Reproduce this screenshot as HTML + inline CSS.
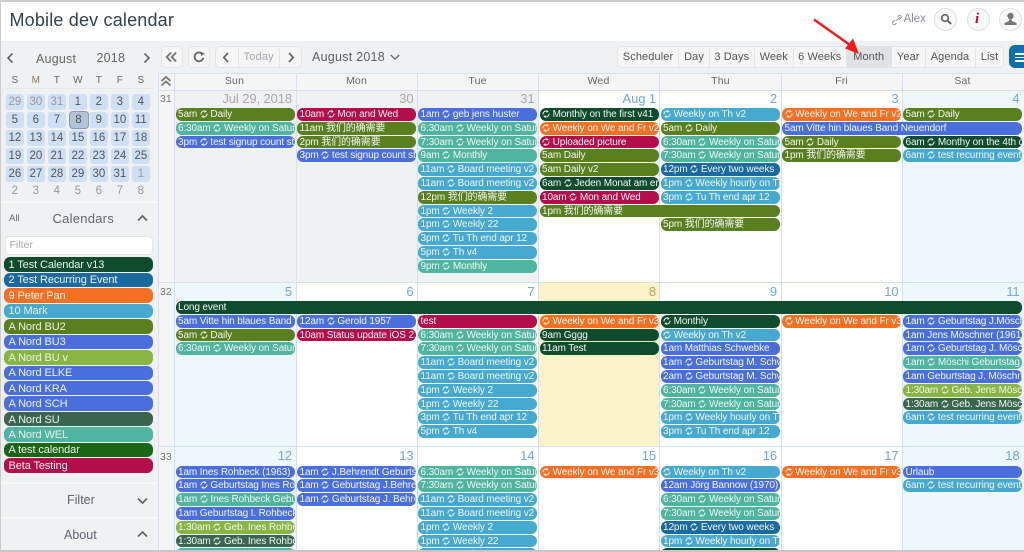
<!DOCTYPE html>
<html><head><meta charset="utf-8"><style>
*{box-sizing:border-box}
html,body{margin:0;padding:0;background:#fff}
body{width:1024px;height:552px;overflow:hidden;font-family:"Liberation Sans","Noto Sans CJK SC",sans-serif}
#w{position:absolute;left:0;top:0;width:1024px;height:552px;overflow:hidden}
.a{position:absolute}
.t{position:absolute;white-space:nowrap;line-height:1}
.cell{position:absolute;width:119px}
.e{height:12.8px;margin-bottom:1px;border-radius:6px;color:#f4f6f4;font-size:10px;letter-spacing:-.12px;line-height:13.8px;padding-left:2.5px;white-space:nowrap;overflow:hidden;position:relative}
.sp{height:13.8px}
.e svg{width:8px;height:8px;vertical-align:-1px;margin:0}
.o{background:#5a7f1e}.g{background:#4fb5a0}.b{background:#4a6edb}.c{background:#b30d4b}.l{background:#46a9cf}.d{background:#0f4c2e}.k{background:#1a6aa0}.r{background:#f57022}.v{background:#88b544}.s{background:#3a6650}.y{background:#1a6615}
.mc{position:absolute;width:18.7px;height:16px;border-radius:3px;background:#cfdff6;text-align:center;font-size:11.5px;line-height:16px;color:#555}
.mn{position:absolute;width:18.7px;text-align:center;font-size:11.5px;line-height:16px;color:#999}
.cal{position:absolute;left:4px;width:148.5px;height:14.5px;border-radius:6px;color:#eef2ee;font-size:11px;letter-spacing:-.1px;line-height:14.5px;padding:.8px 0 0 4.5px;white-space:nowrap}
.btn{position:absolute;top:46px;height:22px;border:1px solid #e3e4e7;border-radius:5px;background:#f6f6f7}
.vb{position:absolute;top:46px;height:22px;border-right:1px solid #e3e4e7;font-size:11px;line-height:23px;text-align:center;color:#555;letter-spacing:.1px}
.dn{position:absolute;text-align:right;font-size:13px;letter-spacing:-.1px;line-height:16px;color:#6fa8dc;width:119px}
.ln{position:absolute;background:#d3e0f8}
.hd{position:absolute;top:75px;font-size:10.5px;line-height:13px;color:#666;text-align:center;width:121px;letter-spacing:.2px}
.wk{position:absolute;left:160px;font-size:10.5px;line-height:12px;color:#777}
</style></head><body><div id="w">
<svg width="0" height="0" style="position:absolute"><defs><symbol id="r" viewBox="0 0 10 10"><path d="M1.3 5.6A3.7 3.7 0 0 1 6.6 1.7M8.7 4.4A3.7 3.7 0 0 1 3.4 8.3" fill="none" stroke="#f2f5f2" stroke-width="1.2"/><path d="M5.6 0L8.4 2.1 5.6 3.6zM4.4 10L1.6 7.9 4.4 6.4z" fill="#f2f5f2"/></symbol></defs></svg>

<!-- header -->
<div class="a" style="left:0;top:0;width:1024px;height:1.5px;background:#ccc"></div>
<div class="a" style="left:0;top:0;width:1px;height:552px;background:#ccc;z-index:5"></div>
<div class="t" style="left:9.5px;top:10.5px;font-size:18px;color:#33404d;letter-spacing:.18px">Mobile dev calendar</div>
<svg class="a" style="left:892px;top:15px" width="10" height="10" viewBox="0 0 10 10"><path d="M4.2 5.8L7.9 2.1M5.6 1.9l1-1a1.4 1.4 0 0 1 2.2 2.2L7 5M4.400 8.100l-1 1A1.400 1.400 0 0 1 1 6.900L3 5" fill="none" stroke="#999" stroke-width="1"/></svg>
<div class="t" style="left:903.5px;top:14px;font-size:11.5px;color:#8a8f96">Alex</div>
<div class="a" style="left:934px;top:8px;width:23px;height:23px;border-radius:50%;border:1px solid #dfdfdf;background:#fafafa"></div>
<svg class="a" style="left:940px;top:13px" width="12" height="12" viewBox="0 0 12 12"><circle cx="5" cy="5" r="3.3" fill="none" stroke="#666" stroke-width="1.7"/><path d="M7.5 7.5L11 11" stroke="#666" stroke-width="2"/></svg>
<div class="a" style="left:966.5px;top:8px;width:23px;height:23px;border-radius:50%;border:1px solid #dfdfdf;background:#fafafa"></div>
<div class="t" style="left:975px;top:12px;font-size:15px;font-weight:bold;font-style:italic;color:#c8102e;font-family:'Liberation Serif',serif">i</div>
<div class="a" style="left:999px;top:8px;width:23px;height:23px;border-radius:50%;border:1px solid #dfdfdf;background:#fafafa"></div>
<svg class="a" style="left:1004px;top:12px" width="13" height="14" viewBox="0 0 13 14"><circle cx="6.5" cy="4" r="3.2" fill="#777"/><path d="M5 7.5h3v1.5l4.5 2v2H.5v-2L5 9z" fill="#777"/></svg>

<!-- toolbar / sidebar bg -->
<div class="a" style="left:0;top:41px;width:1024px;height:33px;background:#f0f1f3"></div>
<div class="a" style="left:0;top:41px;width:158px;height:511px;background:#f0f1f3"></div>

<!-- mini calendar head -->
<svg class="a" style="left:6px;top:52px" width="8" height="12" viewBox="0 0 8 12"><path d="M6.5 1.500L2 6l4.500 4.500" fill="none" stroke="#555" stroke-width="1.5"/></svg>
<div class="t" style="left:36px;top:52.5px;font-size:12.5px;color:#666;letter-spacing:.2px">August</div>
<div class="t" style="left:96.5px;top:51.5px;font-size:12.5px;color:#666;letter-spacing:.2px">2018</div>
<svg class="a" style="left:143px;top:52px" width="8" height="12" viewBox="0 0 8 12"><path d="M1.5 1.500L6 6l-4.500 4.500" fill="none" stroke="#555" stroke-width="1.5"/></svg>
<div class="mn" style="left:5.5px;top:73px;color:#666;font-size:10px">S</div><div class="mn" style="left:26.5px;top:73px;color:#8a7a5a;font-size:10px">M</div><div class="mn" style="left:47.5px;top:73px;color:#666;font-size:10px">T</div><div class="mn" style="left:68.5px;top:73px;color:#666;font-size:10px">W</div><div class="mn" style="left:89.5px;top:73px;color:#666;font-size:10px">T</div><div class="mn" style="left:110.5px;top:73px;color:#666;font-size:10px">F</div><div class="mn" style="left:131.5px;top:73px;color:#666;font-size:10px">S</div>
<div class="a" style="left:5px;top:88px;width:148px;height:1px;background:#e6e7ea"></div>

<div class="mc" style="left:5.5px;top:94px;color:#999">29</div><div class="mc" style="left:26.5px;top:94px;color:#999">30</div><div class="mc" style="left:47.5px;top:94px;color:#999">31</div><div class="mc" style="left:68.5px;top:94px">1</div><div class="mc" style="left:89.5px;top:94px">2</div><div class="mc" style="left:110.5px;top:94px">3</div><div class="mc" style="left:131.5px;top:94px">4</div>
<div class="mc" style="left:5.5px;top:112px">5</div><div class="mc" style="left:26.5px;top:112px">6</div><div class="mc" style="left:47.5px;top:112px">7</div><div class="mc" style="left:68.5px;top:111px;height:18px;width:20px;background:#b5c3d8;border:1px solid #8a9bb0;line-height:16px;border-radius:4px">8</div><div class="mc" style="left:89.5px;top:112px">9</div><div class="mc" style="left:110.5px;top:112px">10</div><div class="mc" style="left:131.5px;top:112px">11</div>
<div class="mc" style="left:5.5px;top:130px">12</div><div class="mc" style="left:26.5px;top:130px">13</div><div class="mc" style="left:47.5px;top:130px">14</div><div class="mc" style="left:68.5px;top:130px">15</div><div class="mc" style="left:89.5px;top:130px">16</div><div class="mc" style="left:110.5px;top:130px">17</div><div class="mc" style="left:131.5px;top:130px">18</div>
<div class="mc" style="left:5.5px;top:148px">19</div><div class="mc" style="left:26.5px;top:148px">20</div><div class="mc" style="left:47.5px;top:148px">21</div><div class="mc" style="left:68.5px;top:148px">22</div><div class="mc" style="left:89.5px;top:148px">23</div><div class="mc" style="left:110.5px;top:148px">24</div><div class="mc" style="left:131.5px;top:148px">25</div>
<div class="mc" style="left:5.5px;top:166px">26</div><div class="mc" style="left:26.5px;top:166px">27</div><div class="mc" style="left:47.5px;top:166px">28</div><div class="mc" style="left:68.5px;top:166px">29</div><div class="mc" style="left:89.5px;top:166px">30</div><div class="mc" style="left:110.5px;top:166px">31</div><div class="mc" style="left:131.5px;top:166px;color:#999">1</div>
<div class="mn" style="left:5.5px;top:183px">2</div><div class="mn" style="left:26.5px;top:183px">3</div><div class="mn" style="left:47.5px;top:183px">4</div><div class="mn" style="left:68.5px;top:183px">5</div><div class="mn" style="left:89.5px;top:183px">6</div><div class="mn" style="left:110.5px;top:183px">7</div><div class="mn" style="left:131.5px;top:183px">8</div>

<!-- calendars -->
<div class="a" style="left:1px;top:201px;width:156px;height:1.5px;background:#f7f7f8"></div>
<div class="t" style="left:9px;top:214px;font-size:9.5px;color:#666">All</div>
<div class="t" style="left:52.5px;top:212px;font-size:13px;color:#5e6670;letter-spacing:.25px">Calendars</div>
<svg class="a" style="left:137px;top:214px" width="11" height="8" viewBox="0 0 11 8"><path d="M1 6.500L5.500 2 10 6.500" fill="none" stroke="#666" stroke-width="1.7"/></svg>
<div class="a" style="left:4.5px;top:236px;width:148px;height:19px;background:#fff;border:1px solid #e4e4e6;border-radius:4px"></div>
<div class="t" style="left:9.5px;top:240px;font-size:10.5px;color:#aaa">Filter</div>
<div class="cal d" style="top:257.3px">1 Test Calendar v13</div>
<div class="cal k" style="top:272.7px">2 Test Recurring Event</div>
<div class="cal r" style="top:288.2px">9 Peter Pan</div>
<div class="cal l" style="top:303.6px">10 Mark</div>
<div class="cal o" style="top:319.1px">A Nord BU2</div>
<div class="cal b" style="top:334.6px">A Nord BU3</div>
<div class="cal v" style="top:350px">A Nord BU v</div>
<div class="cal b" style="top:365.5px">A Nord ELKE</div>
<div class="cal b" style="top:380.9px">A Nord KRA</div>
<div class="cal b" style="top:396.4px">A Nord SCH</div>
<div class="cal s" style="top:411.8px">A Nord SU</div>
<div class="cal g" style="top:427.3px">A Nord WEL</div>
<div class="cal y" style="top:442.7px">A test calendar</div>
<div class="cal c" style="top:458.2px">Beta Testing</div>
<div class="a" style="left:1px;top:482px;width:156px;height:1.5px;background:#f7f7f8"></div>
<div class="t" style="left:67px;top:493.5px;font-size:12.5px;color:#5e6670">Filter</div>
<svg class="a" style="left:137px;top:497px" width="11" height="8" viewBox="0 0 11 8"><path d="M1 1.500L5.500 6 10 1.500" fill="none" stroke="#666" stroke-width="1.7"/></svg>
<div class="a" style="left:1px;top:517px;width:156px;height:1.5px;background:#f7f7f8"></div>
<div class="t" style="left:64px;top:529px;font-size:12.5px;color:#5e6670">About</div>
<svg class="a" style="left:137px;top:530px" width="11" height="8" viewBox="0 0 11 8"><path d="M1 6.500L5.500 2 10 6.500" fill="none" stroke="#666" stroke-width="1.7"/></svg>

<!-- toolbar buttons -->
<div class="btn" style="left:160.5px;width:22px"></div>
<svg class="a" style="left:165px;top:51px" width="13" height="12" viewBox="0 0 13 12"><path d="M6 1.500L1.800 6 6 10.500M11 1.500L6.800 6 11 10.500" fill="none" stroke="#777" stroke-width="1.9"/></svg>
<div class="btn" style="left:187.5px;width:22px"></div>
<svg class="a" style="left:193px;top:51px" width="12" height="12" viewBox="0 0 12 12"><path d="M10.300 6.800A4.400 4.400 0 1 1 8.800 2.500" fill="none" stroke="#666" stroke-width="1.8"/><path d="M7.500 .5L11.500 2.500 8 5z" fill="#666"/></svg>
<div class="btn" style="left:215px;width:86.5px"></div>
<div class="a" style="left:237.5px;top:46px;width:1px;height:22px;background:#e3e4e7"></div>
<div class="a" style="left:279px;top:46px;width:1px;height:22px;background:#e3e4e7"></div>
<svg class="a" style="left:222px;top:52px" width="8" height="11" viewBox="0 0 8 11"><path d="M6 1L1.800 5.500 6 10" fill="none" stroke="#666" stroke-width="1.7"/></svg>
<svg class="a" style="left:287px;top:52px" width="8" height="11" viewBox="0 0 8 11"><path d="M2 1l4.200 4.500L2 10" fill="none" stroke="#666" stroke-width="1.7"/></svg>
<div class="t" style="left:243.5px;top:52px;font-size:11px;color:#a5a8ac;letter-spacing:.2px">Today</div>
<div class="t" style="left:312px;top:50.5px;font-size:12.5px;color:#5a6068;letter-spacing:.25px">August 2018</div>
<svg class="a" style="left:390px;top:54px" width="10" height="7" viewBox="0 0 10 7"><path d="M.8 1L5 5.200 9.200 1" fill="none" stroke="#666" stroke-width="1.3"/></svg>

<div class="btn" style="left:617px;width:387px"></div>
<div class="vb" style="left:618px;width:61px">Scheduler</div>
<div class="vb" style="left:679px;width:31px">Day</div>
<div class="vb" style="left:710px;width:44.5px">3 Days</div>
<div class="vb" style="left:754.5px;width:39.5px">Week</div>
<div class="vb" style="left:794px;width:52.5px">6 Weeks</div>
<div class="vb" style="left:846.5px;width:45.5px;background:#e0e2e6">Month</div>
<div class="vb" style="left:892px;width:33.5px">Year</div>
<div class="vb" style="left:925.5px;width:50px">Agenda</div>
<div class="vb" style="left:975.5px;width:28px;border-right:0">List</div>
<div class="a" style="left:1009px;top:45px;width:20px;height:23px;background:#0f6fae;border-radius:6px"></div>
<div class="a" style="left:1015px;top:53px;width:9px;height:1.8px;background:#fff"></div>
<div class="a" style="left:1015px;top:56.5px;width:9px;height:1.8px;background:#fff"></div>
<div class="a" style="left:1015px;top:60px;width:9px;height:1.8px;background:#fff"></div>

<!-- grid backgrounds -->
<div class="a" style="left:158px;top:74px;width:866px;height:478px;background:#fff"></div>
<div class="a" style="left:158px;top:74px;width:866px;height:16px;background:#f5f5f5"></div>
<div class="a" style="left:158px;top:90px;width:16px;height:462px;background:#f5f5f5"></div>
<div class="a" style="left:174px;top:90px;width:364px;height:192px;background:#f0f1f3"></div>
<div class="a" style="left:902px;top:90px;width:122px;height:192px;background:#eef7fb"></div>
<div class="a" style="left:174px;top:283px;width:122px;height:269px;background:#eef7fb"></div>
<div class="a" style="left:902px;top:283px;width:122px;height:269px;background:#eef7fb"></div>
<div class="a" style="left:539px;top:283px;width:120px;height:163px;background:#fdf3c8"></div>

<div class="ln" style="left:158px;top:73px;width:866px;height:1px"></div>
<div class="ln" style="left:158px;top:89.5px;width:866px;height:1px"></div>
<div class="ln" style="left:158px;top:282px;width:866px;height:1px"></div>
<div class="ln" style="left:158px;top:446px;width:866px;height:1px"></div>
<div class="ln" style="left:157.5px;top:73px;width:1px;height:479px"></div>
<div class="ln" style="left:174px;top:73px;width:1px;height:479px"></div>
<div class="ln" style="left:295.5px;top:73px;width:1px;height:479px"></div>
<div class="ln" style="left:416.5px;top:73px;width:1px;height:479px"></div>
<div class="ln" style="left:538px;top:73px;width:1px;height:479px"></div>
<div class="ln" style="left:659px;top:73px;width:1px;height:479px"></div>
<div class="ln" style="left:780.5px;top:73px;width:1px;height:479px"></div>
<div class="ln" style="left:901.5px;top:73px;width:1px;height:479px"></div>

<svg class="a" style="left:160px;top:75px" width="12" height="12" viewBox="0 0 12 12"><path d="M1.500 6L6 2l4.500 4M1.500 10.500L6 6.500l4.500 4" fill="none" stroke="#777" stroke-width="1.8"/></svg>
<div class="hd" style="left:174px">Sun</div><div class="hd" style="left:296px">Mon</div><div class="hd" style="left:417px">Tue</div><div class="hd" style="left:538px">Wed</div><div class="hd" style="left:660px">Thu</div><div class="hd" style="left:781px">Fri</div><div class="hd" style="left:902px">Sat</div>

<div class="wk" style="top:93px">31</div><div class="wk" style="top:286px">32</div><div class="wk" style="top:451px">33</div>

<!-- day numbers -->
<div class="dn" style="left:173px;top:91px;color:#a8a8a8">Jul 29, 2018</div>
<div class="dn" style="left:294.5px;top:91px;color:#a8a8a8">30</div>
<div class="dn" style="left:415.5px;top:91px;color:#a8a8a8">31</div>
<div class="dn" style="left:537px;top:91px">Aug 1</div>
<div class="dn" style="left:658px;top:91px">2</div>
<div class="dn" style="left:779.5px;top:91px">3</div>
<div class="dn" style="left:900.5px;top:91px">4</div>
<div class="dn" style="left:173px;top:284px">5</div><div class="dn" style="left:294.5px;top:284px">6</div><div class="dn" style="left:415.5px;top:284px">7</div><div class="dn" style="left:537px;top:284px;color:#c0a060">8</div><div class="dn" style="left:658px;top:284px">9</div><div class="dn" style="left:779.5px;top:284px">10</div><div class="dn" style="left:900.5px;top:284px">11</div>
<div class="dn" style="left:173px;top:448px">12</div><div class="dn" style="left:294.5px;top:448px">13</div><div class="dn" style="left:415.5px;top:448px">14</div><div class="dn" style="left:537px;top:448px">15</div><div class="dn" style="left:658px;top:448px">16</div><div class="dn" style="left:779.5px;top:448px">17</div><div class="dn" style="left:900.5px;top:448px">18</div>

<!-- week 1 events -->
<div class="cell" style="left:175.5px;top:108px">
<div class="e o">5am <svg><use href="#r"/></svg> Daily</div>
<div class="e g">6:30am <svg><use href="#r"/></svg> Weekly on Saturday</div>
<div class="e b">3pm <svg><use href="#r"/></svg> test signup count status</div>
</div>
<div class="cell" style="left:297px;top:108px">
<div class="e c">10am <svg><use href="#r"/></svg> Mon and Wed</div>
<div class="e o">11am 我们的确需要</div>
<div class="e o">2pm 我们的确需要</div>
<div class="e b">3pm <svg><use href="#r"/></svg> test signup count status</div>
</div>
<div class="cell" style="left:418px;top:108px">
<div class="e b">1am <svg><use href="#r"/></svg> geb jens huster</div>
<div class="e g">6:30am <svg><use href="#r"/></svg> Weekly on Saturday</div>
<div class="e g">7:30am <svg><use href="#r"/></svg> Weekly on Saturday</div>
<div class="e g">9am <svg><use href="#r"/></svg> Monthly</div>
<div class="e l">11am <svg><use href="#r"/></svg> Board meeting v2</div>
<div class="e l">11am <svg><use href="#r"/></svg> Board meeting v2</div>
<div class="e o">12pm 我们的确需要</div>
<div class="e l">1pm <svg><use href="#r"/></svg> Weekly 2</div>
<div class="e l">1pm <svg><use href="#r"/></svg> Weekly 22</div>
<div class="e l">3pm <svg><use href="#r"/></svg> Tu Th end apr 12</div>
<div class="e l">5pm <svg><use href="#r"/></svg> Th v4</div>
<div class="e g">9pm <svg><use href="#r"/></svg> Monthly</div>
</div>
<div class="cell" style="left:539.5px;top:108px">
<div class="e d"><svg><use href="#r"/></svg> Monthly on the first v41</div>
<div class="e r"><svg><use href="#r"/></svg> Weekly on We and Fr v2</div>
<div class="e c"><svg><use href="#r"/></svg> Uploaded picture</div>
<div class="e o">5am Daily</div>
<div class="e o">5am Daily v2</div>
<div class="e d">6am <svg><use href="#r"/></svg> Jeden Monat am ersten</div>
<div class="e c">10am <svg><use href="#r"/></svg> Mon and Wed</div>
<div class="e o" style="width:240px">1pm 我们的确需要</div>
</div>
<div class="cell" style="left:660.5px;top:108px">
<div class="e l"><svg><use href="#r"/></svg> Weekly on Th v2</div>
<div class="e o">5am <svg><use href="#r"/></svg> Daily</div>
<div class="e g">6:30am <svg><use href="#r"/></svg> Weekly on Saturday</div>
<div class="e g">7:30am <svg><use href="#r"/></svg> Weekly on Saturday</div>
<div class="e k">12pm <svg><use href="#r"/></svg> Every two weeks</div>
<div class="e l">1pm <svg><use href="#r"/></svg> Weekly hourly on Th</div>
<div class="e l">3pm <svg><use href="#r"/></svg> Tu Th end apr 12</div>
<div class="sp"></div>
<div class="e o">5pm 我们的确需要</div>
</div>
<div class="cell" style="left:782px;top:108px">
<div class="e r"><svg><use href="#r"/></svg> Weekly on We and Fr v2</div>
<div class="e b" style="width:240px">5am Vitte hin blaues Band Neuendorf</div>
<div class="e o">5am <svg><use href="#r"/></svg> Daily</div>
<div class="e o">1pm 我们的确需要</div>
</div>
<div class="cell" style="left:903px;top:108px">
<div class="e o">5am <svg><use href="#r"/></svg> Daily</div>
<div class="sp"></div>
<div class="e d">6am <svg><use href="#r"/></svg> Monthy on the 4th day</div>
<div class="e l">6am <svg><use href="#r"/></svg> test recurring event</div>
</div>

<!-- week 2 events -->
<div class="cell" style="left:175.5px;top:301px">
<div class="e d" style="width:846.5px">Long event</div>
<div class="e b">5am Vitte hin blaues Band Neuendorf</div>
<div class="e o">5am <svg><use href="#r"/></svg> Daily</div>
<div class="e g">6:30am <svg><use href="#r"/></svg> Weekly on Saturday</div>
</div>
<div class="cell" style="left:297px;top:314.8px">
<div class="e b">12am <svg><use href="#r"/></svg> Gerold 1957</div>
<div class="e c">10am Status update iOS 2.0 release</div>
</div>
<div class="cell" style="left:418px;top:314.8px">
<div class="e c">test</div>
<div class="e g">6:30am <svg><use href="#r"/></svg> Weekly on Saturday</div>
<div class="e g">7:30am <svg><use href="#r"/></svg> Weekly on Saturday</div>
<div class="e l">11am <svg><use href="#r"/></svg> Board meeting v2</div>
<div class="e l">11am <svg><use href="#r"/></svg> Board meeting v2</div>
<div class="e l">1pm <svg><use href="#r"/></svg> Weekly 2</div>
<div class="e l">1pm <svg><use href="#r"/></svg> Weekly 22</div>
<div class="e l">3pm <svg><use href="#r"/></svg> Tu Th end apr 12</div>
<div class="e l">5pm <svg><use href="#r"/></svg> Th v4</div>
</div>
<div class="cell" style="left:539.5px;top:314.8px">
<div class="e r"><svg><use href="#r"/></svg> Weekly on We and Fr v3</div>
<div class="e d">9am Gggg</div>
<div class="e d">11am Test</div>
</div>
<div class="cell" style="left:660.5px;top:314.8px">
<div class="e d"><svg><use href="#r"/></svg> Monthly</div>
<div class="e l"><svg><use href="#r"/></svg> Weekly on Th v2</div>
<div class="e b">1am Matthias Schwebke</div>
<div class="e b">1am <svg><use href="#r"/></svg> Geburtstag M. Schwebke</div>
<div class="e b">2am <svg><use href="#r"/></svg> Geburtstag M. Schwebke</div>
<div class="e g">6:30am <svg><use href="#r"/></svg> Weekly on Saturday</div>
<div class="e g">7:30am <svg><use href="#r"/></svg> Weekly on Saturday</div>
<div class="e l">1pm <svg><use href="#r"/></svg> Weekly hourly on Th</div>
<div class="e l">3pm <svg><use href="#r"/></svg> Tu Th end apr 12</div>
</div>
<div class="cell" style="left:782px;top:314.8px">
<div class="e r"><svg><use href="#r"/></svg> Weekly on We and Fr v3</div>
</div>
<div class="cell" style="left:903px;top:314.8px">
<div class="e b">1am <svg><use href="#r"/></svg> Geburtstag J.Möschner</div>
<div class="e b">1am Jens Möschner (1961)</div>
<div class="e b">1am <svg><use href="#r"/></svg> Geburtstag J. Möschner</div>
<div class="e g">1am <svg><use href="#r"/></svg> Möschi Geburtstag</div>
<div class="e b">1am Geburtstag J. Möschner</div>
<div class="e v">1:30am <svg><use href="#r"/></svg> Geb. Jens Möschner</div>
<div class="e s">1:30am <svg><use href="#r"/></svg> Geb. Jens Möschner</div>
<div class="e l">6am <svg><use href="#r"/></svg> test recurring event</div>
</div>

<!-- week 3 events -->
<div class="cell" style="left:175.5px;top:465.7px">
<div class="e b">1am Ines Rohbeck (1963)</div>
<div class="e b">1am <svg><use href="#r"/></svg> Geburtstag Ines Rohbeck</div>
<div class="e g">1am <svg><use href="#r"/></svg> Ines Rohbeck Geburtstag</div>
<div class="e b">1am Geburtstag I. Rohbeck</div>
<div class="e v">1:30am <svg><use href="#r"/></svg> Geb. Ines Rohbeck</div>
<div class="e s">1:30am <svg><use href="#r"/></svg> Geb. Ines Rohbeck</div>
<div class="e g">6:30am <svg><use href="#r"/></svg> Weekly</div>
</div>
<div class="cell" style="left:297px;top:465.7px">
<div class="e b">1am <svg><use href="#r"/></svg> J.Behrendt Geburtstag</div>
<div class="e b">1am <svg><use href="#r"/></svg> Geburtstag J.Behrendt</div>
<div class="e b">1am <svg><use href="#r"/></svg> Geburtstag J. Behrendt</div>
</div>
<div class="cell" style="left:418px;top:465.7px">
<div class="e g">6:30am <svg><use href="#r"/></svg> Weekly on Saturday</div>
<div class="e g">7:30am <svg><use href="#r"/></svg> Weekly on Saturday</div>
<div class="e l">11am <svg><use href="#r"/></svg> Board meeting v2</div>
<div class="e l">11am <svg><use href="#r"/></svg> Board meeting v2</div>
<div class="e l">1pm <svg><use href="#r"/></svg> Weekly 2</div>
<div class="e l">1pm <svg><use href="#r"/></svg> Weekly 22</div>
<div class="e l">3pm <svg><use href="#r"/></svg> Tu Th</div>
</div>
<div class="cell" style="left:539.5px;top:465.7px">
<div class="e r"><svg><use href="#r"/></svg> Weekly on We and Fr v3</div>
</div>
<div class="cell" style="left:660.5px;top:465.7px">
<div class="e l"><svg><use href="#r"/></svg> Weekly on Th v2</div>
<div class="e b">12am Jörg Bannow (1970)</div>
<div class="e g">6:30am <svg><use href="#r"/></svg> Weekly on Saturday</div>
<div class="e g">7:30am <svg><use href="#r"/></svg> Weekly on Saturday</div>
<div class="e k">12pm <svg><use href="#r"/></svg> Every two weeks</div>
<div class="e l">1pm <svg><use href="#r"/></svg> Weekly hourly on Th</div>
<div class="e d">3pm</div>
</div>
<div class="cell" style="left:782px;top:465.7px">
<div class="e r"><svg><use href="#r"/></svg> Weekly on We and Fr v3</div>
</div>
<div class="cell" style="left:903px;top:465.7px">
<div class="e b">Urlaub</div>
<div class="e l">6am <svg><use href="#r"/></svg> test recurring event</div>
</div>

<!-- red arrow -->
<svg class="a" style="left:805px;top:10px;z-index:6" width="65" height="50" viewBox="0 0 65 50"><path d="M9 9.500L45 35" stroke="#ee1c1c" stroke-width="2.4"/><path d="M54 44L40 38.500 48 28.500z" fill="#ee1c1c"/></svg>

<div class="a" style="left:0;top:550px;width:1024px;height:2px;background:#c8c8c8;z-index:5"></div>
</div></body></html>
